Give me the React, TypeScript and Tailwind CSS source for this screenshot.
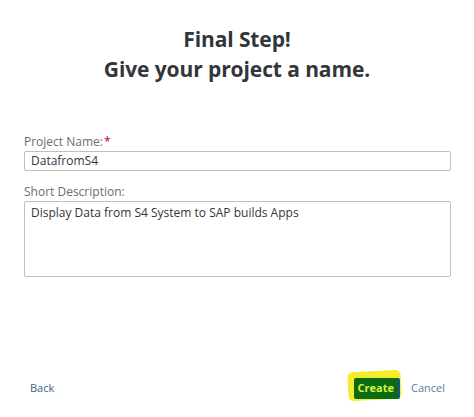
import React from 'react';

const font = { fontFamily: '"Open Sans", "Noto Sans", Arial, sans-serif' };

export default function App() {
  return (
    <div className="w-[474px] h-[417px] bg-white flex flex-col text-[#32363a]" style={font}>
      {/* Heading */}
      <div className="pt-[24px] flex flex-col items-center text-[21px] font-bold leading-[30px] tracking-[-0.1px]">
        <div>Final Step!</div>
        <div>Give your project a name.</div>
      </div>

      {/* Form */}
      <div className="mt-[51px] px-[24px] flex flex-col text-[12px]">
        <label className="text-[#6a6d70] leading-[14px]">
          Project Name:<span className="text-[#bb0000] ml-[1px]">*</span>
        </label>
        <div className="mt-[2px] w-[427px] h-[20px] border border-[#bfbfbf] rounded-[2px] px-[6px] flex items-center text-[#32363a]">
          DatafromS4
        </div>
        <label className="mt-[14px] text-[#6a6d70] leading-[14px]">Short Description:</label>
        <div className="mt-[2px] w-[427px] h-[76px] border border-[#bfbfbf] rounded-[2px] px-[6px] pt-[2px] text-[#32363a]">
          Display Data from S4 System to SAP builds Apps
        </div>
      </div>

      {/* Footer */}
      <div className="mt-auto mb-[18px] pl-[30px] pr-[29px] flex items-center text-[11px]">
        <span className="text-[#3b5f8a]">Back</span>
        <div className="ml-auto flex items-center gap-[11px]">
          <div className="relative">
            <div className="absolute left-[-6px] top-[-7px] w-[53px] h-[29px] bg-[#f6ec2a] rounded-[5px] -rotate-3" />
            <div className="relative h-[21px] px-[4px] flex items-center bg-[#0b6a15] border-r-2 border-[#1d4f8a] rounded-[2px] font-bold text-[#d7f53a]">
              Create
            </div>
          </div>
          <span className="text-[#5b7aa5]">Cancel</span>
        </div>
      </div>
    </div>
  );
}
